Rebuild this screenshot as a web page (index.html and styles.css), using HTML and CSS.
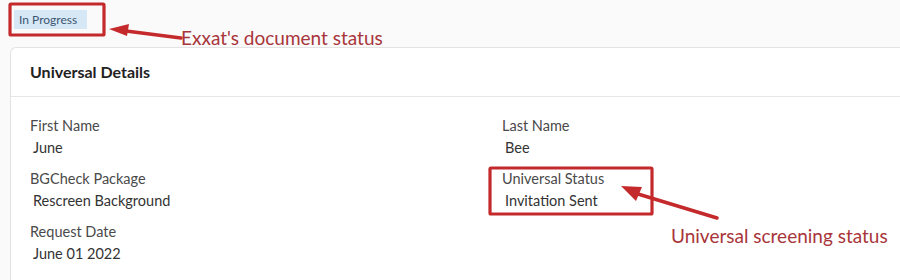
FILE: index.html
```html
<!DOCTYPE html>
<html>
<head>
<meta charset="utf-8">
<link rel="stylesheet" href="styles.css">
</head>
<body>
<div class="page">
  <div class="status-row"><span class="badge">In Progress</span></div>
  <div class="card">
    <div class="card-header">Universal Details</div>
    <div class="card-body">
      <div class="field"><div class="label">First Name</div><div class="value">June</div></div>
      <div class="field"><div class="label">Last Name</div><div class="value">Bee</div></div>
      <div class="field"><div class="label">BGCheck Package</div><div class="value">Rescreen Background</div></div>
      <div class="field"><div class="label">Universal Status</div><div class="value">Invitation Sent</div></div>
      <div class="field"><div class="label">Request Date</div><div class="value">June 01 2022</div></div>
    </div>
  </div>
</div>
<svg class="overlay" width="900" height="280" viewBox="0 0 900 280">
  <rect x="10" y="4" width="94" height="31" fill="none" stroke="#c42a2c" stroke-width="3.2" rx="1"/>
  <rect x="490" y="168" width="162" height="46" fill="none" stroke="#c42a2c" stroke-width="3.2" rx="1"/>
  <path d="M181 38 L126 31" stroke="#c42a2c" stroke-width="3.5" stroke-linecap="round"/>
  <path d="M109 29 L129 24 L127 36 Z" fill="#c42a2c"/>
  <path d="M717 218 L638 194" stroke="#c42a2c" stroke-width="3.5" stroke-linecap="round"/>
  <path d="M621 186 L642 187 L636 201 Z" fill="#c42a2c"/>
</svg>
<span class="note note-doc">Exxat's document status</span>
<span class="note note-univ">Universal screening status</span>
</body>
</html>
```
FILE: styles.css
```css
html, body {
  margin: 0;
  padding: 0;
}
body {
  width: 900px;
  height: 280px;
  overflow: hidden;
  background: #fafafa;
  font-family: Lato, "Open Sans", sans-serif;
  color: #333;
  position: relative;
}
.page {
  padding-top: 8px;
}
.status-row {
  padding-left: 14px;
  height: 19px;
}
.badge {
  display: inline-block;
  height: 19px;
  line-height: 19px;
  padding: 0 10px 0 5px;
  background: #d6e7f6;
  color: #3d5670;
  font-size: 12px;
}
.card {
  margin-top: 20px;
  margin-left: 10px;
  width: 890px;
  height: 233px;
  background: #fff;
  border: 1px solid #e3e3e3;
  border-right: none;
  border-bottom: none;
  border-radius: 6px 0 0 0;
  box-sizing: border-box;
}
.card-header {
  height: 48px;
  line-height: 48px;
  padding-left: 19px;
  font-size: 16px;
  font-weight: 700;
  color: #222;
  border-bottom: 1px solid #e6e6e6;
}
.card-body {
  display: grid;
  grid-template-columns: 472px 1fr;
  padding: 18px 0 0 19px;
}
.field {
  margin-bottom: 9px;
}
.label {
  font-size: 14.5px;
  line-height: 22px;
  color: #4a4a4a;
}
.value {
  font-size: 14.5px;
  line-height: 22px;
  color: #333;
  padding-left: 3px;
}
.overlay {
  position: absolute;
  left: 0;
  top: 0;
}
.note {
  position: absolute;
  font-family: Lato, "Open Sans", sans-serif;
  font-size: 19px;
  color: #a8353a;
  white-space: nowrap;
  line-height: 20px;
}
.note-doc {
  left: 181px;
  top: 28px;
}
.note-univ {
  left: 671px;
  top: 226px;
}
```
